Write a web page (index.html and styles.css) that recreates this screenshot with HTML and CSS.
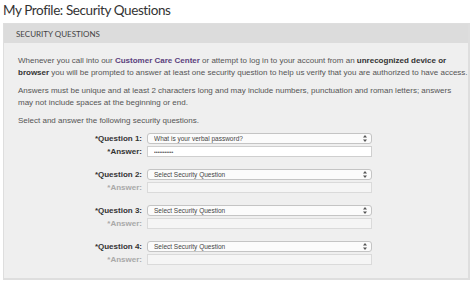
FILE: index.html
```html
<!DOCTYPE html>
<html lang="en">
<head>
    <meta charset="UTF-8">
    <meta name="viewport" content="width=device-width, initial-scale=1.0">
    <title>My Profile: Security Questions</title>
    <link rel="stylesheet" href="styles.css">
</head>
<body>
    <h1>My Profile: Security Questions</h1>

    <div class="panel">
        <div class="panel-head">Security Questions</div>

        <div class="panel-body">
            <p>Whenever you call into our <a href="#">Customer Care Center</a> or attempt to log in to your account from an <b>unrecognized device or browser</b> you will be prompted to answer at least one security question to help us verify that you are authorized to have access.</p>
            <p>Answers must be unique and at least 2 characters long and may include numbers, punctuation and roman letters; answers may not include spaces at the beginning or end.</p>
            <p>Select and answer the following security questions.</p>

            <div class="question-group">
                <label class="field-label">*Question 1:</label>
                <div class="select-wrap">
                    <select>
                        <option>What is your verbal password?</option>
                    </select>
                    <svg class="arrows" width="4" height="7" viewBox="0 0 4 7"><path d="M0 2.6 L2 0 L4 2.6Z M0 4.4 L2 7 L4 4.4Z" fill="#555"/></svg>
                </div>
                <label class="field-label">*Answer:</label>
                <input type="password" value="verbalpass1">
            </div>

            <div class="question-group">
                <label class="field-label">*Question 2:</label>
                <div class="select-wrap">
                    <select>
                        <option>Select Security Question</option>
                    </select>
                    <svg class="arrows" width="4" height="7" viewBox="0 0 4 7"><path d="M0 2.6 L2 0 L4 2.6Z M0 4.4 L2 7 L4 4.4Z" fill="#555"/></svg>
                </div>
                <label class="field-label disabled">*Answer:</label>
                <input type="text" disabled>
            </div>

            <div class="question-group">
                <label class="field-label">*Question 3:</label>
                <div class="select-wrap">
                    <select>
                        <option>Select Security Question</option>
                    </select>
                    <svg class="arrows" width="4" height="7" viewBox="0 0 4 7"><path d="M0 2.6 L2 0 L4 2.6Z M0 4.4 L2 7 L4 4.4Z" fill="#555"/></svg>
                </div>
                <label class="field-label disabled">*Answer:</label>
                <input type="text" disabled>
            </div>

            <div class="question-group">
                <label class="field-label">*Question 4:</label>
                <div class="select-wrap">
                    <select>
                        <option>Select Security Question</option>
                    </select>
                    <svg class="arrows" width="4" height="7" viewBox="0 0 4 7"><path d="M0 2.6 L2 0 L4 2.6Z M0 4.4 L2 7 L4 4.4Z" fill="#555"/></svg>
                </div>
                <label class="field-label disabled">*Answer:</label>
                <input type="text" disabled>
            </div>
        </div>
    </div>
</body>
</html>
```

FILE: styles.css
```css
body {
    margin: 0;
    padding: 0 4px 0 3px;
    background-color: #fff;
    color: #333;
    font-family: 'Liberation Sans', Arial, sans-serif;
}

h1 {
    margin: 0;
    padding-top: 2px;
    height: 21px;
    font-family: Lato, sans-serif;
    font-size: 13.5px;
    font-weight: 400;
    letter-spacing: -0.4px;
    color: #333;
    line-height: 17px;
}

.panel {
    border: 1px solid #dedede;
    border-right-width: 2px;
    border-bottom-width: 2px;
}

.panel-head {
    height: 19px;
    padding-left: 12px;
    background-color: #dcdcdc;
    font-family: Lato, sans-serif;
    font-size: 8px;
    text-transform: uppercase;
    color: #444;
    line-height: 21px;
}

.panel-body {
    background-color: #efefef;
    padding: 12px 0 13px 14px;
}

p {
    margin: 0 0 6px;
    font-size: 8px;
    line-height: 12px;
    color: #555;
}

p b {
    color: #333;
}

a {
    color: #5b3f7d;
    font-weight: bold;
    text-decoration: none;
}

.question-group {
    display: grid;
    grid-template-columns: 124px 225px;
    column-gap: 5px;
    row-gap: 2px;
    margin-bottom: 12px;
}

.question-group:first-of-type {
    margin-top: 5px;
}

.question-group:last-child {
    margin-bottom: 0;
}

.field-label {
    text-align: right;
    font-size: 8px;
    font-weight: bold;
    line-height: 11px;
    color: #333;
}

.field-label.disabled {
    color: #a9a9a9;
}

.select-wrap {
    position: relative;
}

select {
    -webkit-appearance: none;
    appearance: none;
    display: block;
    width: 100%;
    height: 11px;
    margin: 0;
    padding: 0 0 0 6px;
    border: 1px solid #c4c4c4;
    border-radius: 3px;
    background-color: #fbfbfb;
    font-family: 'Liberation Sans', Arial, sans-serif;
    font-size: 6.5px;
    line-height: 9px;
    color: #444;
}

.arrows {
    position: absolute;
    right: 5px;
    top: 2px;
}

input {
    display: block;
    box-sizing: border-box;
    width: 100%;
    height: 11px;
    margin: 0;
    padding: 0 6px;
    border: 1px solid #cfcfcf;
    background-color: #fff;
    font-size: 5px;
    color: #555;
}

input:disabled {
    background-color: #f5f5f5;
    border-color: #dadada;
}
```
